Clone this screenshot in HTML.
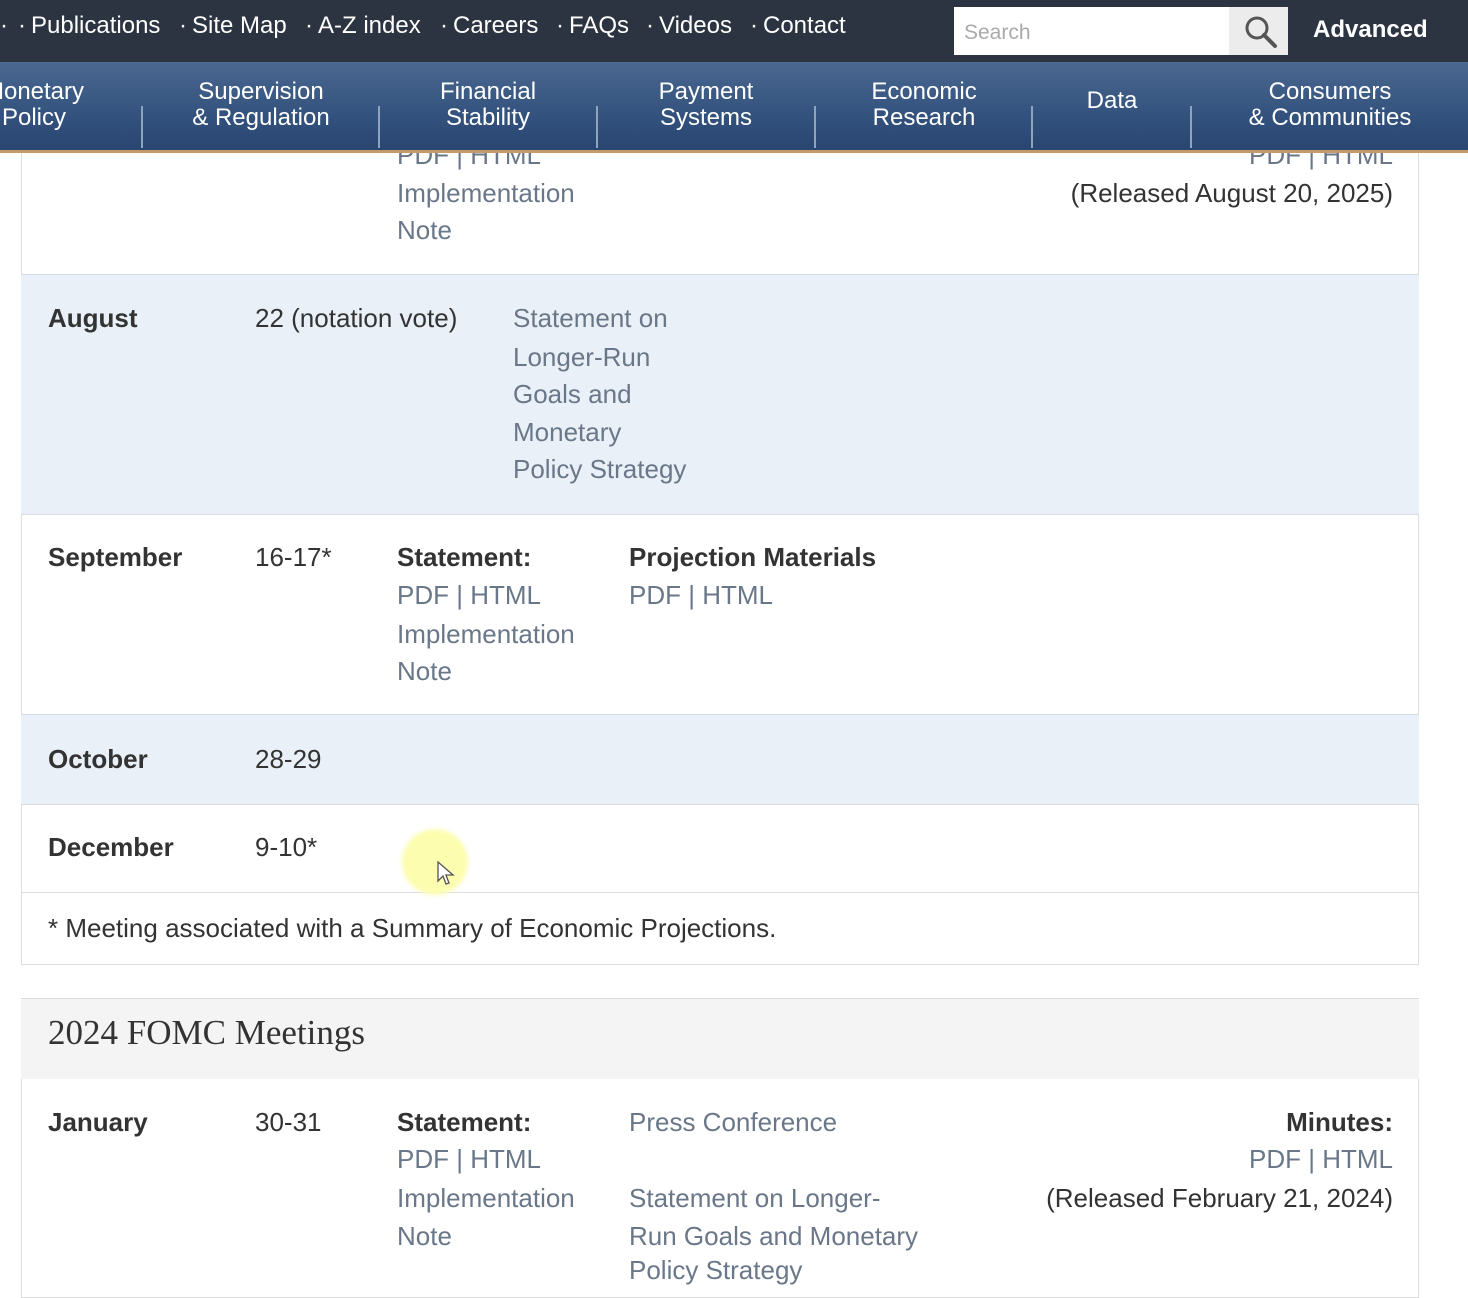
<!DOCTYPE html>
<html><head><meta charset="utf-8"><style>
*{margin:0;padding:0;box-sizing:border-box}
body{width:1468px;height:1266px;overflow:hidden;background:#fff;font-family:"Liberation Sans",Arial,sans-serif;position:relative;color:#333}
.t{position:absolute;font-size:26px;line-height:38px;white-space:nowrap}
.b{font-weight:bold;color:#333}
.l{color:#6a7789}
.r{text-align:right;right:75px}
.bx{position:absolute;left:21px;width:1398px}
.top{position:absolute;left:0;top:0;width:1468px;height:62px;background:#2c3341}
.top span{position:absolute;top:11px;font-size:24px;color:#fff;line-height:30px;white-space:nowrap}
.nav{position:absolute;left:0;top:62px;width:1468px;height:91px;background:linear-gradient(#4a6890,#33527d 60%,#284570);border-bottom:3px solid #c49a6c}
.nav div{position:absolute;top:17px;color:#fff;font-size:24px;line-height:26px;text-align:center;white-space:nowrap;transform:translateX(-50%)}
.sep{position:absolute;top:44px;width:2px;height:42px;background:#8fa3bd}
</style></head><body>

<div class="bx" style="top:152px;height:813px;border:1px solid #ddd;border-top:none"></div>
<div class="bx" style="top:274px;height:241px;background:#e9f0f7;border-top:1px solid #d8dde3;border-bottom:1px solid #d8dde3"></div>
<div class="bx" style="top:714px;height:91px;background:#e9f0f7;border-top:1px solid #d8dde3;border-bottom:1px solid #d8dde3"></div>
<div class="bx" style="top:892px;height:1px;background:#ddd"></div>
<div class="bx" style="top:998px;height:300px;border:1px solid #ddd"></div>
<div class="bx" style="top:999px;height:80px;background:#f4f4f4"></div>

<div class="t l" style="left:397px;top:136px">PDF | HTML</div>
<div class="t l" style="left:397px;top:174px">Implementation</div>
<div class="t l" style="left:397px;top:211px">Note</div>
<div class="t l r" style="top:136px">PDF | HTML</div>
<div class="t r" style="top:174px">(Released August 20, 2025)</div>

<div class="t b" style="left:48px;top:299px">August</div>
<div class="t" style="left:255px;top:299px">22 (notation vote)</div>
<div class="t l" style="left:513px;top:299px">Statement on</div>
<div class="t l" style="left:513px;top:338px">Longer-Run</div>
<div class="t l" style="left:513px;top:375px">Goals and</div>
<div class="t l" style="left:513px;top:413px">Monetary</div>
<div class="t l" style="left:513px;top:450px">Policy Strategy</div>

<div class="t b" style="left:48px;top:538px">September</div>
<div class="t" style="left:255px;top:538px">16-17*</div>
<div class="t b" style="left:397px;top:538px">Statement:</div>
<div class="t l" style="left:397px;top:576px">PDF | HTML</div>
<div class="t l" style="left:397px;top:615px">Implementation</div>
<div class="t l" style="left:397px;top:652px">Note</div>
<div class="t b" style="left:629px;top:538px">Projection Materials</div>
<div class="t l" style="left:629px;top:576px">PDF | HTML</div>

<div class="t b" style="left:48px;top:740px">October</div>
<div class="t" style="left:255px;top:740px">28-29</div>
<div class="t b" style="left:48px;top:828px">December</div>
<div class="t" style="left:255px;top:828px">9-10*</div>

<div style="position:absolute;left:402px;top:829px;width:66px;height:66px;border-radius:50%;background:#fdfdb0;filter:blur(2px)"></div>
<svg style="position:absolute;left:437px;top:861px" width="18" height="26" viewBox="0 0 18 26"><path d="M1 1 L1 20 L6 15 L9 23 L12 22 L9 14 L16 14 Z" fill="#fff" stroke="#555" stroke-width="1.3"/></svg>

<div class="t" style="left:48px;top:909px">* Meeting associated with a Summary of Economic Projections.</div>

<div class="t" style="left:48px;top:1012px;font-family:'Liberation Serif',serif;font-size:35px;line-height:42px">2024 FOMC Meetings</div>

<div class="t b" style="left:48px;top:1103px">January</div>
<div class="t" style="left:255px;top:1103px">30-31</div>
<div class="t b" style="left:397px;top:1103px">Statement:</div>
<div class="t l" style="left:397px;top:1140px">PDF | HTML</div>
<div class="t l" style="left:397px;top:1179px">Implementation</div>
<div class="t l" style="left:397px;top:1217px">Note</div>
<div class="t l" style="left:629px;top:1103px">Press Conference</div>
<div class="t l" style="left:629px;top:1179px">Statement on Longer-</div>
<div class="t l" style="left:629px;top:1217px">Run Goals and Monetary</div>
<div class="t l" style="left:629px;top:1251px">Policy Strategy</div>
<div class="t b r" style="top:1103px">Minutes:</div>
<div class="t l r" style="top:1140px">PDF | HTML</div>
<div class="t r" style="top:1179px">(Released February 21, 2024)</div>

<div class="nav">
<div style="left:34px">Monetary<br>Policy</div>
<div style="left:261px">Supervision<br>&amp; Regulation</div>
<div style="left:488px">Financial<br>Stability</div>
<div style="left:706px">Payment<br>Systems</div>
<div style="left:924px">Economic<br>Research</div>
<div style="left:1112px;top:26px">Data</div>
<div style="left:1330px">Consumers<br>&amp; Communities</div>
<span class="sep" style="left:141px"></span><span class="sep" style="left:378px"></span><span class="sep" style="left:596px"></span><span class="sep" style="left:814px"></span><span class="sep" style="left:1031px"></span><span class="sep" style="left:1190px"></span>
</div>

<div class="top">
<span style="left:0px">·</span><span style="left:18px">·</span><span style="left:31px">Publications</span>
<span style="left:179px">·</span><span style="left:192px">Site Map</span>
<span style="left:305px">·</span><span style="left:318px">A-Z index</span>
<span style="left:440px">·</span><span style="left:453px">Careers</span>
<span style="left:556px">·</span><span style="left:569px">FAQs</span>
<span style="left:646px">·</span><span style="left:659px">Videos</span>
<span style="left:750px">·</span><span style="left:763px">Contact</span>
<div style="position:absolute;left:954px;top:7px;width:275px;height:48px;background:#fff"></div>
<span style="left:964px;top:18px;color:#aaa;font-size:21px">Search</span>
<div style="position:absolute;left:1229px;top:7px;width:59px;height:48px;background:#ececec"></div>
<svg style="position:absolute;left:1244px;top:15px" width="34" height="34" viewBox="0 0 34 34"><circle cx="13" cy="13" r="10" fill="none" stroke="#555" stroke-width="3"/><path d="M20 20 L31 31" stroke="#555" stroke-width="4" stroke-linecap="round"/></svg>
<span style="left:1313px;top:15px;font-weight:bold;font-size:24px">Advanced</span>
</div>
</body></html>
